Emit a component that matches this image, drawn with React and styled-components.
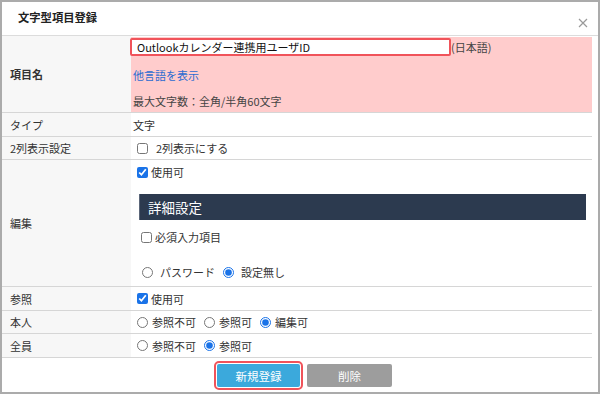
import React from "react";
import styled, { createGlobalStyle } from "styled-components";

const Global = createGlobalStyle`
  html, body { margin: 0; padding: 0; background: #fff; }
  body { font-family: "Noto Sans CJK JP", "Noto Sans", sans-serif; color: #333; }
  * { box-sizing: border-box; }
`;

const Dialog = styled.div`
  width: 600px;
  height: 394px;
  border: 2px solid #ababab;
  background: #fff;
  display: flex;
  flex-direction: column;
`;

const Header = styled.div`
  height: 34px;
  flex: none;
  border-bottom: 1px solid #dcdcdc;
  display: flex;
  align-items: center;
  justify-content: space-between;
  padding: 0 9px 0 16px;
`;

const Title = styled.h1`
  margin: 0;
  font-size: 11.3px;
  font-weight: 700;
  color: #222;
  line-height: 14px;
  margin-top: -3px;
`;

const Close = styled.button`
  border: 0;
  background: none;
  padding: 0;
  width: 12px;
  height: 12px;
  margin-top: 9px;
  display: flex;
  align-items: center;
  justify-content: center;
  cursor: pointer;
`;

const Body = styled.div`
  padding-right: 6px;
  flex: none;
`;

const Row = styled.div`
  display: grid;
  grid-template-columns: 129px 1fr;
  height: ${(p) => p.$h}px;
  border-bottom: 1px solid #d6d6d6;
`;

const Label = styled.div`
  background: #f7f7f7;
  display: flex;
  align-items: center;
  padding-left: 8px;
  font-size: 11px;
  font-weight: ${(p) => (p.$bold ? 700 : 400)};
  color: #333;
`;

const Value = styled.div`
  display: flex;
  flex-direction: ${(p) => (p.$column ? "column" : "row")};
  align-items: ${(p) => (p.$column ? "stretch" : "center")};
  padding-left: ${(p) => p.$pl ?? 2}px;
  font-size: 11px;
  background: ${(p) => p.$bg || "transparent"};
  margin-top: ${(p) => p.$mt || 0}px;
`;

const NameLine = styled.div`
  display: flex;
  align-items: center;
  height: 18px;
  margin-top: 1px;
  margin-left: -3px;
`;

const TextInput = styled.input`
  width: 321px;
  height: 18px;
  border: 2px solid #f0535a;
  border-radius: 2px;
  padding: 0 5px;
  font: inherit;
  font-size: 11px;
  color: #111;
  outline: none;
  background: #fff;
`;

const Note = styled.span`
  color: #444;
  font-size: 11px;
  line-height: 14px;
  margin-top: ${(p) => p.$mt || 0}px;
`;

const Link = styled.a`
  color: #2b6bd1;
  text-decoration: none;
  font-size: 11px;
  line-height: 14px;
  margin-top: 12px;
  align-self: flex-start;
  cursor: pointer;
`;

const Line = styled.div`
  display: flex;
  align-items: center;
  height: 14px;
  margin-top: ${(p) => p.$mt || 0}px;
  padding-left: ${(p) => p.$pl || 0}px;
  gap: ${(p) => p.$gap || 8}px;
`;

const Opt = styled.label`
  display: inline-flex;
  align-items: center;
  gap: ${(p) => p.$gap ?? 4}px;
  font-size: 11px;
  color: #333;
  line-height: 14px;
  white-space: nowrap;
`;

const Box = styled.input`
  width: 11px;
  height: 11px;
  margin: 0;
  accent-color: #1a73e8;
  flex: none;
`;

const SectionBar = styled.div`
  height: 26px;
  margin: 15px 6px 0 6px;
  background: #2c3a4f;
  color: #fff;
  font-size: 13.5px;
  display: flex;
  align-items: center;
  padding-left: 8px;
  border-left: 1px solid #5b6679;
`;

const Footer = styled.div`
  flex: 1;
  display: flex;
  align-items: center;
  justify-content: center;
  padding-left: 9px;
  gap: 7px;
`;

const Button = styled.button`
  width: ${(p) => p.$w}px;
  height: 23px;
  border: 0;
  border-radius: 2px;
  background: ${(p) => p.$bg};
  color: #fff;
  font-family: inherit;
  font-size: 11.5px;
  cursor: pointer;
  outline: ${(p) => (p.$marked ? "2px solid #f0535a" : "none")};
  outline-offset: 1px;
  margin-top: 1px;
`;

const Check = ({ label, checked, gap }) => (
  <Opt $gap={gap}>
    <Box type="checkbox" defaultChecked={checked} />
    {label}
  </Opt>
);

const Radio = ({ name, label, checked, gap }) => (
  <Opt $gap={gap}>
    <Box type="radio" name={name} defaultChecked={checked} />
    {label}
  </Opt>
);

export default function App() {
  return (
    <>
      <Global />
      <Dialog>
        <Header>
          <Title>文字型項目登録</Title>
          <Close aria-label="close">
            <svg width="10" height="10" viewBox="0 0 10 10">
              <path d="M1 1L9 9M9 1L1 9" stroke="#9a9a9a" strokeWidth="1.2" fill="none" />
            </svg>
          </Close>
        </Header>
        <Body>
          <Row $h={77}>
            <Label $bold>項目名</Label>
            <Value $column $bg="#ffcccc" $mt={1}>
              <NameLine>
                <TextInput defaultValue="Outlookカレンダー連携用ユーザID" />
                <Note>(日本語)</Note>
              </NameLine>
              <Link>他言語を表示</Link>
              <Note $mt={12}>最大文字数：全角/半角60文字</Note>
            </Value>
          </Row>
          <Row $h={24}>
            <Label>タイプ</Label>
            <Value>文字</Value>
          </Row>
          <Row $h={23}>
            <Label>2列表示設定</Label>
            <Value $pl={6}>
              <Check label="2列表示にする" gap={8} />
            </Value>
          </Row>
          <Row $h={127}>
            <Label>編集</Label>
            <Value $column>
              <Line $mt={5} $pl={4}>
                <Check label="使用可" gap={3} checked />
              </Line>
              <SectionBar>詳細設定</SectionBar>
              <Line $mt={10} $pl={8}>
                <Check label="必須入力項目" gap={3} />
              </Line>
              <Line $mt={21} $pl={9} $gap={8}>
                <Radio name="edit" label="パスワード" gap={7} />
                <Radio name="edit" label="設定無し" gap={7} checked />
              </Line>
            </Value>
          </Row>
          <Row $h={24}>
            <Label>参照</Label>
            <Value $pl={6}>
              <Check label="使用可" gap={3} checked />
            </Value>
          </Row>
          <Row $h={23}>
            <Label>本人</Label>
            <Value $pl={6}>
              <Line $gap={8}>
                <Radio name="self" label="参照不可" gap={4} />
                <Radio name="self" label="参照可" gap={4} />
                <Radio name="self" label="編集可" gap={4} checked />
              </Line>
            </Value>
          </Row>
          <Row $h={24}>
            <Label>全員</Label>
            <Value $pl={6}>
              <Line $gap={8}>
                <Radio name="all" label="参照不可" gap={4} />
                <Radio name="all" label="参照可" gap={4} checked />
              </Line>
            </Value>
          </Row>
        </Body>
        <Footer>
          <Button $w={83} $bg="#3ba9dc" $marked>新規登録</Button>
          <Button $w={85} $bg="#9d9d9d">削除</Button>
        </Footer>
      </Dialog>
    </>
  );
}
